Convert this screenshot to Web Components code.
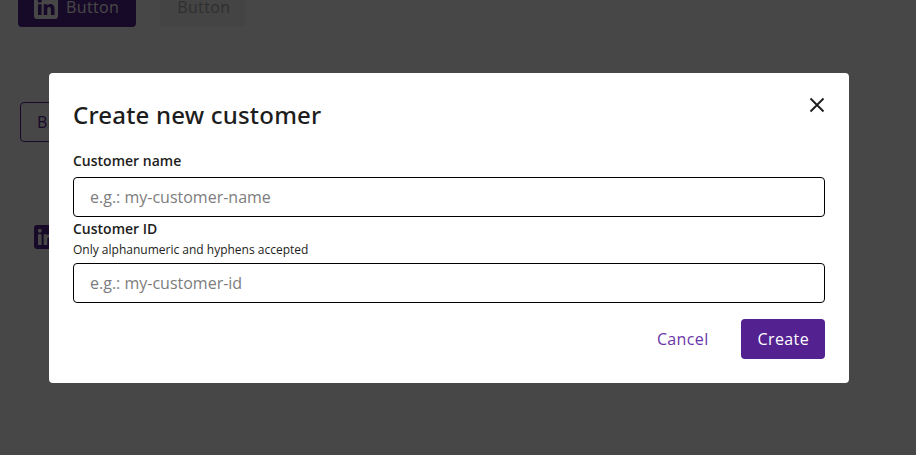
<!DOCTYPE html>
<html lang="en">
<head>
<meta charset="utf-8">
<title>Create new customer</title>
<style>
    html, body {
        margin: 0;
        height: 100%;
        overflow: hidden;
        background: #fff;
        font-family: "Open Sans", "Noto Sans", sans-serif;
    }
</style>
</head>
<body>
<demo-page>
    <demo-button variant="primary" icon>Button</demo-button>
    <demo-button variant="disabled">Button</demo-button>
</demo-page>
<modal-dialog heading="Create new customer">
    <form-field label="Customer name" placeholder="e.g.: my-customer-name"></form-field>
    <form-field label="Customer ID" hint="Only alphanumeric and hyphens accepted" placeholder="e.g.: my-customer-id"></form-field>
    <demo-button slot="actions" variant="link">Cancel</demo-button>
    <demo-button slot="actions" variant="primary">Create</demo-button>
</modal-dialog>

<script>
const LINKEDIN_ICON = `
    <svg width="24" height="24" viewBox="0 0 24 24" aria-hidden="true">
        <path fill="currentColor" fill-rule="evenodd" d="M3 0h18a3 3 0 0 1 3 3v18a3 3 0 0 1-3 3H3a3 3 0 0 1-3-3V3a3 3 0 0 1 3-3zM4 9.2V20h3.6V9.2zM5.8 3.8a2 2 0 1 0 0 4 2 2 0 0 0 0-4zM9.7 9.2V20h3.6v-5.6c0-1.6.7-2.4 1.9-2.4s1.7.9 1.7 2.4V20h3.6v-6.5c0-3-1.6-4.6-4-4.6-1.4 0-2.5.6-3.2 1.7V9.2z"/>
    </svg>`;

class DemoButton extends HTMLElement {
    constructor() {
        super();
        this.attachShadow({mode: 'open'});
    }

    connectedCallback() {
        const icon = this.hasAttribute('icon') ? LINKEDIN_ICON : '';
        this.shadowRoot.innerHTML = `
            <style>
                :host {
                    display: inline-flex;
                }
                button {
                    display: inline-flex;
                    align-items: center;
                    gap: 8px;
                    height: 40px;
                    padding: 0 15px 0 16px;
                    border: 1px solid transparent;
                    border-radius: 4px;
                    font: 400 16px/24px "Open Sans", "Noto Sans", sans-serif;
                    letter-spacing: 0.37px;
                    cursor: pointer;
                }
                :host([icon]) button {
                    padding-left: 15px;
                    padding-right: 16px;
                }
                :host([variant="primary"]) button {
                    background: #542190;
                    color: #fff;
                }
                :host([variant="outline"]) button {
                    background: #fff;
                    border-color: #542190;
                    color: #542190;
                }
                :host([variant="link"]) button {
                    background: transparent;
                    color: #6a35a8;
                }
                :host([variant="disabled"]) button {
                    background: #f2f2f2;
                    color: #a9a9a9;
                }
            </style>
            <button type="button">${icon}<slot></slot></button>
        `;
    }
}

class DemoPage extends HTMLElement {
    constructor() {
        super();
        this.attachShadow({mode: 'open'});
    }

    connectedCallback() {
        this.shadowRoot.innerHTML = `
            <style>
                :host {
                    display: block;
                    margin-top: -13px;
                    padding-left: 18px;
                    color: #542190;
                }
                .row {
                    display: flex;
                    gap: 24px;
                }
                .outline {
                    margin: 75px 0 0 2px;
                }
                .linkedin {
                    margin: 83px 0 0 16px;
                }
                svg {
                    display: block;
                }
            </style>
            <div class="row"><slot></slot></div>
            <div class="outline"><demo-button variant="outline">Button</demo-button></div>
            <div class="linkedin">${LINKEDIN_ICON}</div>
        `;
    }
}

class FormField extends HTMLElement {
    constructor() {
        super();
        this.attachShadow({mode: 'open'});
    }

    connectedCallback() {
        const hint = this.getAttribute('hint');
        this.shadowRoot.innerHTML = `
            <style>
                :host {
                    display: block;
                    color: #1d1d20;
                }
                label {
                    display: block;
                    font: 600 14px/20px "Open Sans", "Noto Sans", sans-serif;
                }
                .hint {
                    font: 400 12px/16px "Open Sans", "Noto Sans", sans-serif;
                    margin: 3px 0 -1px;
                }
                input {
                    display: block;
                    box-sizing: border-box;
                    width: 100%;
                    height: 40px;
                    margin-top: 6px;
                    padding: 0 16px;
                    border: 1px solid #000;
                    border-radius: 4px;
                    outline: none;
                    background: #fff;
                    font: 400 16px "Open Sans", "Noto Sans", sans-serif;
                    color: #1d1d20;
                }
                input::placeholder {
                    color: #7d7d7d;
                    opacity: 1;
                }
            </style>
            <label for="field">${this.getAttribute('label')}</label>
            ${hint ? `<div class="hint">${hint}</div>` : ''}
            <input id="field" type="text" placeholder="${this.getAttribute('placeholder')}">
        `;
    }
}

class ModalDialog extends HTMLElement {
    constructor() {
        super();
        this.attachShadow({mode: 'open'});
    }

    connectedCallback() {
        this.shadowRoot.innerHTML = `
            <style>
                :host {
                    position: fixed;
                    inset: 0;
                    display: block;
                    background: rgba(0, 0, 0, 0.72);
                }
                .dialog {
                    position: absolute;
                    left: 49px;
                    top: 73px;
                    box-sizing: border-box;
                    width: 800px;
                    height: 310px;
                    padding: 24px;
                    background: #fff;
                    border-radius: 4px;
                    display: flex;
                    flex-direction: column;
                }
                header {
                    display: flex;
                    justify-content: space-between;
                    align-items: flex-start;
                    margin-bottom: 18px;
                }
                h2 {
                    margin: 0;
                    font: 500 24px/36px "Noto Sans", "Open Sans", sans-serif;
                    letter-spacing: 0.2px;
                    color: #1d1d20;
                }
                .close {
                    display: flex;
                    padding: 0;
                    border: 0;
                    background: none;
                    cursor: pointer;
                }
                .fields {
                    display: flex;
                    flex-direction: column;
                    gap: 2px;
                }
                .actions {
                    display: flex;
                    justify-content: flex-end;
                    gap: 16px;
                    margin-top: 16px;
                }
            </style>
            <div class="dialog" role="dialog">
                <header>
                    <h2>${this.getAttribute('heading')}</h2>
                    <button class="close" aria-label="Close">
                        <svg width="16" height="16" viewBox="0 0 16 16">
                            <path d="M1.5 1.5l13 13M14.5 1.5l-13 13" stroke="#1d1d20" stroke-width="1.9" fill="none"/>
                        </svg>
                    </button>
                </header>
                <div class="fields"><slot></slot></div>
                <div class="actions"><slot name="actions"></slot></div>
            </div>
        `;
    }
}

customElements.define('demo-button', DemoButton);
customElements.define('demo-page', DemoPage);
customElements.define('form-field', FormField);
customElements.define('modal-dialog', ModalDialog);
</script>
</body>
</html>
